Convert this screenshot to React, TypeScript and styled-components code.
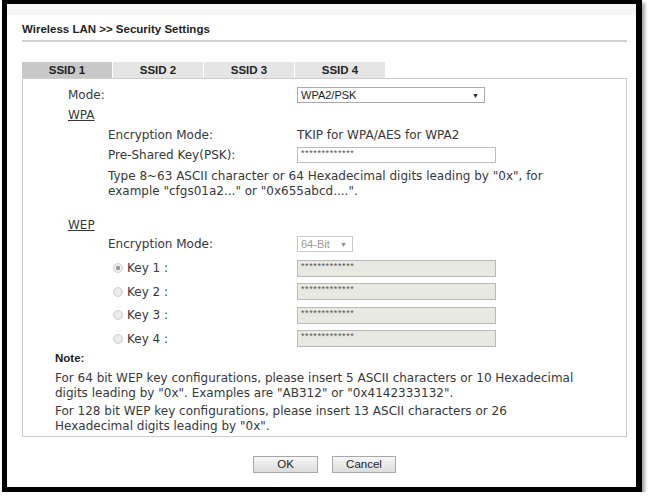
import React from "react";
import styled, { createGlobalStyle } from "styled-components";

const Global = createGlobalStyle`
  html, body {
    margin: 0;
    padding: 0;
    background: #fff;
  }
`;

const Frame = styled.div`
  box-sizing: border-box;
  margin-left: 2px;
  width: 640px;
  height: 492px;
  border: 5px solid #000;
  border-top-width: 4px;
  border-right-width: 6px;
  box-shadow: 3px 3px 3px rgba(0, 0, 0, 0.35);
  background: #fff;
`;

const TopStrip = styled.div`
  height: 11px;
  background: #f6f6f6;
`;

const Content = styled.div`
  padding: 0 9px 0 15px;
`;

const Title = styled.div`
  margin-top: 7px;
  padding-bottom: 4px;
  border-bottom: 2px solid #cfcfcf;
  font-family: "Liberation Sans", Arial, sans-serif;
  font-weight: bold;
  font-size: 11.5px;
  line-height: 14px;
  color: #222;
`;

const Tabs = styled.div`
  display: flex;
  margin-top: 20px;
`;

const Tab = styled.div<{ active?: boolean }>`
  width: 90px;
  height: 16px;
  margin-right: 1px;
  background: ${(p) => (p.active ? "#c8c8c8" : "#e5e5e5")};
  display: flex;
  align-items: center;
  justify-content: center;
  font-family: "Liberation Sans", Arial, sans-serif;
  font-weight: bold;
  font-size: 11.5px;
  color: #222;
`;

const Panel = styled.div`
  border: 1px solid #cccccc;
  padding: 6px 0 2px 0;
  font-family: "DejaVu Sans", Tahoma, sans-serif;
  font-size: 12px;
  color: #383838;
`;

const Row = styled.div<{ h: number }>`
  display: grid;
  grid-template-columns: 274px 1fr;
  align-items: center;
  height: ${(p) => p.h}px;
`;

const Label = styled.div<{ indent: number }>`
  padding-left: ${(p) => p.indent}px;
  display: flex;
  align-items: center;
  white-space: nowrap;
`;

const Section = styled.span`
  text-decoration: underline;
`;

const SelectBox = styled.div<{ w: number; disabled?: boolean }>`
  box-sizing: border-box;
  width: ${(p) => p.w}px;
  height: 16px;
  border: 1px solid ${(p) => (p.disabled ? "#c8c8c8" : "#a9a9a9")};
  background: #fff;
  display: flex;
  align-items: center;
  justify-content: space-between;
  padding: 0 5px 0 3px;
  font-family: "Liberation Sans", Arial, sans-serif;
  font-size: 11px;
  color: ${(p) => (p.disabled ? "#9a9a9a" : "#222")};
`;

const Arrow = styled.span<{ disabled?: boolean }>`
  font-size: 7px;
  color: ${(p) => (p.disabled ? "#888" : "#222")};
`;

const TextBox = styled.div<{ disabled?: boolean }>`
  box-sizing: border-box;
  width: 199px;
  height: ${(p) => (p.disabled ? 17 : 16)}px;
  border: 1px solid ${(p) => (p.disabled ? "#b9b9b9" : "#bdbdbd")};
  background: ${(p) => (p.disabled ? "#e9e9e3" : "#fff")};
  padding: 1px 0 0 3px;
  font-family: "Liberation Sans", Arial, sans-serif;
  font-size: 9px;
  line-height: 9px;
  letter-spacing: 0.6px;
  color: #555;
`;

const Hint = styled.div`
  margin-top: 4px;
  padding-left: 85px;
  line-height: 15px;
`;

const Radio = styled.span<{ checked?: boolean }>`
  box-sizing: border-box;
  width: 10px;
  height: 10px;
  margin-right: 4px;
  border-radius: 50%;
  border: 1px solid #d0d0d0;
  background: radial-gradient(circle, ${(p) => (p.checked ? "#9a9a9a 0 2px, #f2f2f2 2.5px" : "#f2f2f2 0")}, #e2e2e2 100%);
`;

const NoteTitle = styled.div`
  height: 12px;
  margin-top: 1px;
  display: flex;
  align-items: center;
  padding-left: 32px;
  font-family: "Liberation Sans", Arial, sans-serif;
  font-weight: bold;
  font-size: 11.5px;
  color: #222;
`;

const NoteText = styled.div<{ mt: number }>`
  margin-top: ${(p) => p.mt}px;
  padding-left: 32px;
  line-height: 15px;
`;

const Buttons = styled.div`
  display: flex;
  justify-content: center;
  gap: 14px;
  margin-top: 19px;
`;

const Button = styled.button<{ w: number }>`
  box-sizing: border-box;
  width: ${(p) => p.w}px;
  height: 17px;
  padding: 0;
  border: 1px solid #a8a8a8;
  background: linear-gradient(#f7f7f7, #dcdcdc);
  font-family: "Liberation Sans", Arial, sans-serif;
  font-size: 11.5px;
  color: #222;
`;

const Spacer = styled.div<{ h: number }>`
  height: ${(p) => p.h}px;
`;

const stars = "*************";

const keys = [1, 2, 3, 4];

const App = () => {
  return (
    <>
      <Global />
      <Frame>
        <TopStrip />
        <Content>
          <Title>Wireless LAN &gt;&gt; Security Settings</Title>
          <Tabs>
            <Tab active>SSID 1</Tab>
            <Tab>SSID 2</Tab>
            <Tab>SSID 3</Tab>
            <Tab>SSID 4</Tab>
          </Tabs>
          <Panel>
            <Row h={20}>
              <Label indent={45}>Mode:</Label>
              <SelectBox w={188}>
                WPA2/PSK <Arrow>▼</Arrow>
              </SelectBox>
            </Row>
            <Row h={20}>
              <Label indent={45}>
                <Section>WPA</Section>
              </Label>
            </Row>
            <Row h={20}>
              <Label indent={85}>Encryption Mode:</Label>
              <div>TKIP for WPA/AES for WPA2</div>
            </Row>
            <Row h={20}>
              <Label indent={85}>Pre-Shared Key(PSK):</Label>
              <TextBox>{stars}</TextBox>
            </Row>
            <Hint>
              Type 8~63 ASCII character or 64 Hexadecimal digits leading by "0x", for
              <br />
              example "cfgs01a2..." or "0x655abcd....".
            </Hint>
            <Spacer h={17} />
            <Row h={18}>
              <Label indent={45}>
                <Section>WEP</Section>
              </Label>
            </Row>
            <Row h={20}>
              <Label indent={85}>Encryption Mode:</Label>
              <SelectBox w={56} disabled>
                64-Bit <Arrow disabled>▼</Arrow>
              </SelectBox>
            </Row>
            <Spacer h={2.5} />
            {keys.map((k) => (
              <Row h={23.5} key={k}>
                <Label indent={90}>
                  <Radio checked={k === 1} />
                  Key {k} :
                </Label>
                <TextBox disabled>{stars}</TextBox>
              </Row>
            ))}
            <NoteTitle>Note:</NoteTitle>
            <NoteText mt={7}>
              For 64 bit WEP key configurations, please insert 5 ASCII characters or 10 Hexadecimal
              <br />
              digits leading by "0x". Examples are "AB312" or "0x4142333132".
            </NoteText>
            <NoteText mt={3}>
              For 128 bit WEP key configurations, please insert 13 ASCII characters or 26
              <br />
              Hexadecimal digits leading by "0x".
            </NoteText>
          </Panel>
          <Buttons>
            <Button w={65}>OK</Button>
            <Button w={64}>Cancel</Button>
          </Buttons>
        </Content>
      </Frame>
    </>
  );
};

export default App;
